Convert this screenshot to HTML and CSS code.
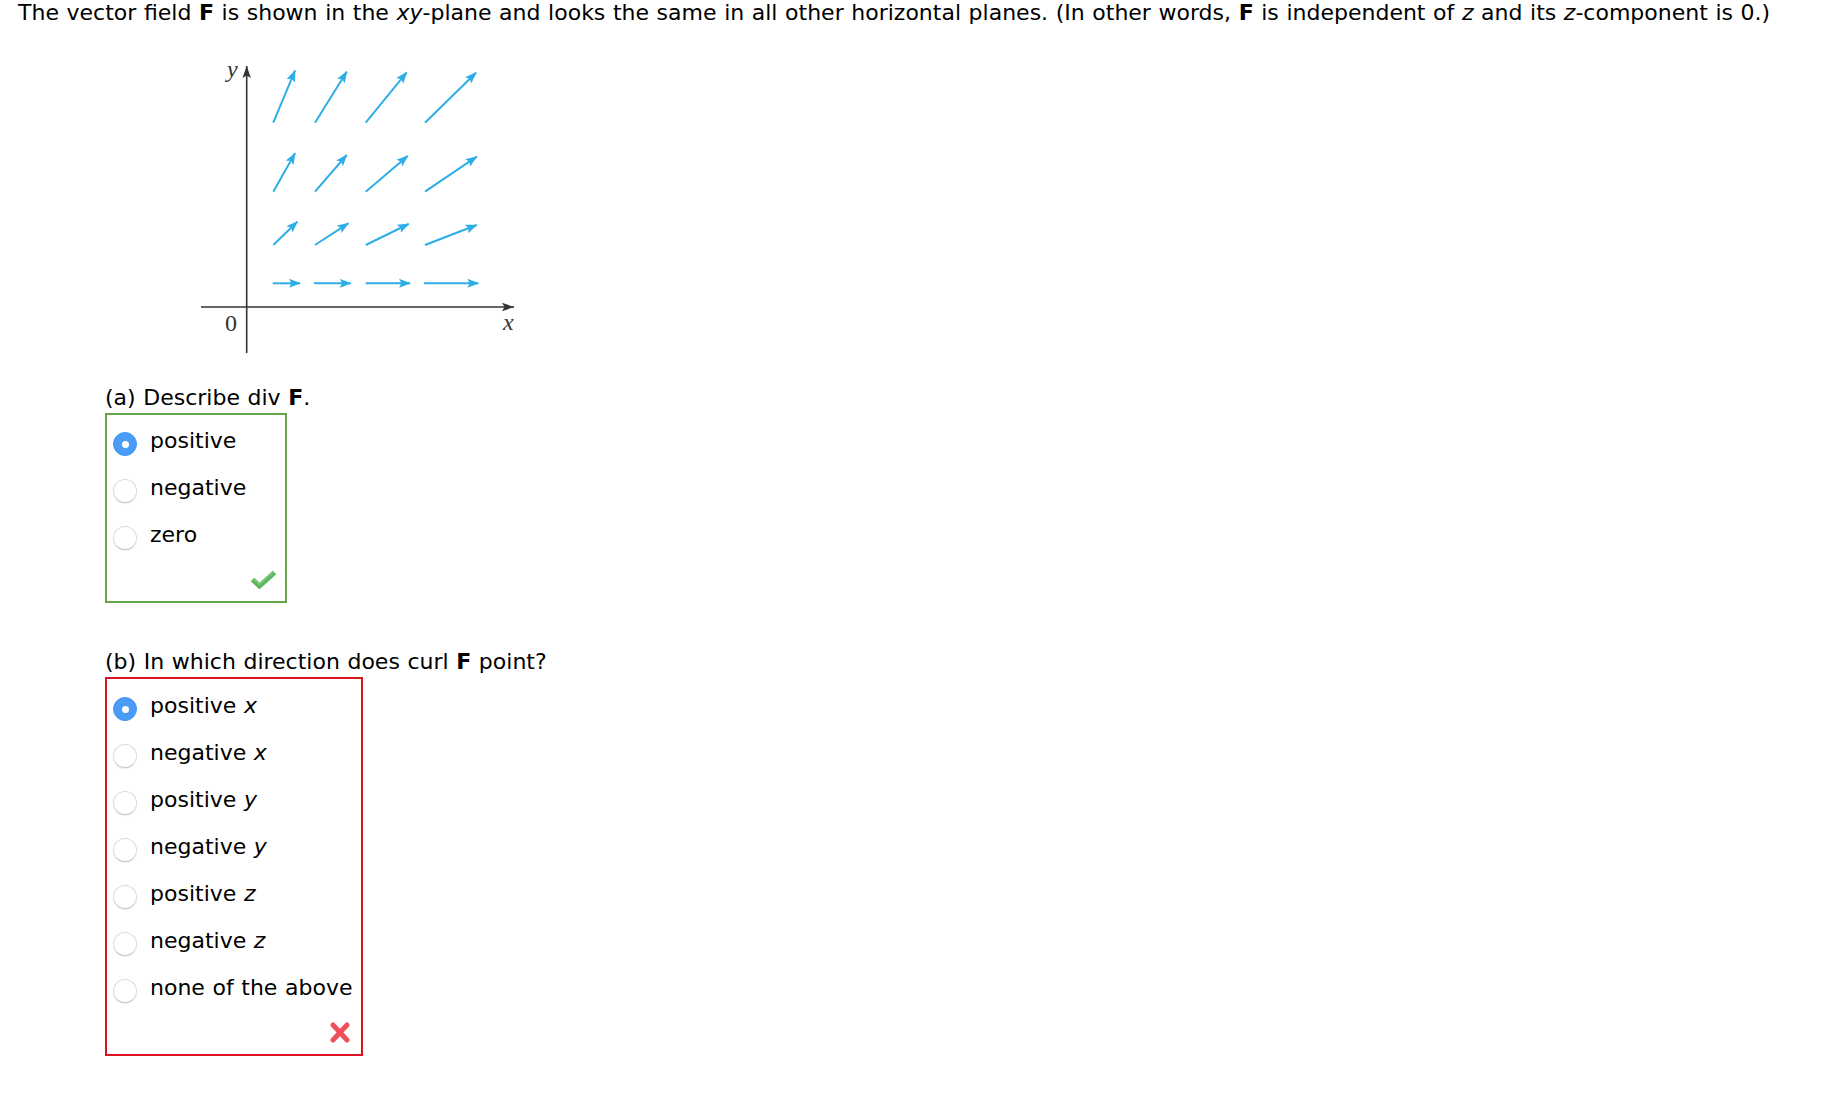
FILE: index.html
```html
<!DOCTYPE html>
<html>
<head>
<meta charset="utf-8">
<title>Vector field</title>
<link rel="stylesheet" href="styles.css">
</head>
<body>
<p class="intro">The vector field <b>F</b> is shown in the <i>xy</i>-plane and looks the same in all other horizontal planes. (In other words, <b>F</b> is independent of <i>z</i> and its <i>z</i>-component is 0.)</p>

<svg class="graph" width="340" height="305" viewBox="190 55 340 305">
  <defs>
    <marker id="ah" markerUnits="userSpaceOnUse" markerWidth="14" markerHeight="10" refX="11" refY="5" orient="auto">
      <path d="M0,0.5 L12,5 L0,9.5 L2.4,5 Z" fill="#2eaee6"/>
    </marker>
    <marker id="axh" markerUnits="userSpaceOnUse" markerWidth="13" markerHeight="10" refX="12" refY="5" orient="auto">
      <path d="M0,0.8 L12,5 L0,9.2 L2.5,5 Z" fill="#333"/>
    </marker>
  </defs>
  <line class="axis" x1="246.7" y1="353" x2="246.7" y2="66"/>
  <line class="axis" x1="201" y1="307" x2="514" y2="307"/>
  <text class="lbl it" x="227" y="77">y</text>
  <text class="lbl" x="225" y="331">0</text>
  <text class="lbl it" x="503" y="330">x</text>

  <line class="vec" x1="273.3" y1="122.7" x2="295" y2="70.7"/>
  <line class="vec" x1="315" y1="122.7" x2="346.7" y2="71.7"/>
  <line class="vec" x1="365.7" y1="122.7" x2="406.7" y2="72.3"/>
  <line class="vec" x1="425" y1="122.7" x2="476" y2="72.7"/>

  <line class="vec" x1="273.3" y1="191.7" x2="295" y2="153.3"/>
  <line class="vec" x1="315" y1="191.7" x2="346.7" y2="155"/>
  <line class="vec" x1="365.7" y1="191.7" x2="407.7" y2="156"/>
  <line class="vec" x1="425" y1="191.7" x2="476.7" y2="156.7"/>

  <line class="vec" x1="273.3" y1="245" x2="297.3" y2="221.7"/>
  <line class="vec" x1="315" y1="245" x2="348.3" y2="223.3"/>
  <line class="vec" x1="365.7" y1="245" x2="408.7" y2="224"/>
  <line class="vec" x1="425" y1="245" x2="476.7" y2="225"/>

  <line class="vec" x1="272.7" y1="283.3" x2="300" y2="283.3"/>
  <line class="vec" x1="314" y1="283.3" x2="350.7" y2="283.3"/>
  <line class="vec" x1="365.7" y1="283.3" x2="410" y2="283.3"/>
  <line class="vec" x1="424" y1="283.3" x2="478.3" y2="283.3"/>
</svg>

<div class="part part-a">
  <div class="part-label">(a) Describe div <b>F</b>.</div>
  <div class="answers correct">
    <div class="opt"><span class="radio on"></span><span class="opt-text">positive</span></div>
    <div class="opt"><span class="radio"></span><span class="opt-text">negative</span></div>
    <div class="opt"><span class="radio"></span><span class="opt-text">zero</span></div>
    <div class="footer foot-a">
      <svg class="mark" width="27" height="19" viewBox="0 0 27 19">
        <polyline points="2.5,9.5 9.5,16 24.5,2.5" fill="none" stroke="#5db55a" stroke-width="5"/>
        <polyline points="3.5,8.8 9.5,14.4 23.6,1.8" fill="none" stroke="#7cc776" stroke-width="1.6"/>
      </svg>
    </div>
  </div>
</div>

<div class="part part-b">
  <div class="part-label">(b) In which direction does curl <b>F</b> point?</div>
  <div class="answers wrong">
    <div class="opt"><span class="radio on"></span><span class="opt-text">positive <i>x</i></span></div>
    <div class="opt"><span class="radio"></span><span class="opt-text">negative <i>x</i></span></div>
    <div class="opt"><span class="radio"></span><span class="opt-text">positive <i>y</i></span></div>
    <div class="opt"><span class="radio"></span><span class="opt-text">negative <i>y</i></span></div>
    <div class="opt"><span class="radio"></span><span class="opt-text">positive <i>z</i></span></div>
    <div class="opt"><span class="radio"></span><span class="opt-text">negative <i>z</i></span></div>
    <div class="opt"><span class="radio"></span><span class="opt-text">none of the above</span></div>
    <div class="footer foot-b">
      <svg class="mark" width="20" height="21" viewBox="0 0 20 21">
        <line x1="3" y1="3" x2="17" y2="18" stroke="#f0505b" stroke-width="5" stroke-linecap="round"/>
        <line x1="17" y1="3" x2="3" y2="18" stroke="#f0505b" stroke-width="5" stroke-linecap="round"/>
      </svg>
    </div>
  </div>
</div>
</body>
</html>
```

FILE: styles.css
```css
html, body {
  margin: 0;
  padding: 0;
  background: #fff;
}

body {
  font-family: "DejaVu Sans", Verdana, sans-serif;
  font-size: 22px;
  line-height: 25px;
  word-spacing: 0.6px;
  color: #000;
}

.intro {
  margin: 0;
  padding-left: 18px;
}

.graph {
  display: block;
  margin: 30px 0 0 190px;
}

.axis {
  stroke: #333;
  stroke-width: 1.6;
  marker-end: url(#axh);
}

.vec {
  stroke: #2eaee6;
  stroke-width: 2;
  marker-end: url(#ah);
}

.lbl {
  font-family: "Liberation Serif", "Times New Roman", serif;
  font-size: 24px;
  fill: #333;
  word-spacing: 0;
}

.lbl.it {
  font-style: italic;
}

.part {
  margin-left: 105px;
}

.part-a .part-label {
  margin-top: 25px;
}

.part-b .part-label {
  margin-top: 46px;
}

.answers {
  margin-top: 3px;
  border: 2px solid;
  box-sizing: border-box;
  padding-top: 2px;
}

.answers.correct {
  width: 182px;
  border-color: #64a646;
}

.answers.wrong {
  width: 258px;
  border-color: #d9141e;
  padding-top: 3px;
}

.opt {
  display: flex;
  align-items: flex-start;
  height: 47px;
}

.radio {
  flex: none;
  width: 24px;
  height: 24px;
  margin: 15px 13px 0 6px;
  box-sizing: border-box;
  border-radius: 50%;
  background: #fff;
  border: 1px solid #dcdcdc;
  border-bottom-color: #c6c6c6;
  box-shadow: 0 1px 1px rgba(0, 0, 0, 0.08);
  position: relative;
}

.radio.on {
  background: #4a9cf6;
  border-color: #4096f4;
  box-shadow: none;
}

.radio.on::after {
  content: "";
  position: absolute;
  left: 8px;
  top: 8px;
  width: 7px;
  height: 7px;
  border-radius: 50%;
  background: #fff;
}

.opt-text {
  padding-top: 11px;
  white-space: nowrap;
}

.footer {
  display: flex;
  justify-content: flex-end;
  align-items: flex-start;
  height: 43px;
}

.foot-a {
  padding-right: 8px;
}

.foot-a .mark {
  margin-top: 12px;
}

.foot-b {
  padding-right: 11px;
}

.foot-b .mark {
  margin-top: 11px;
}

.mark {
  display: block;
}
```
